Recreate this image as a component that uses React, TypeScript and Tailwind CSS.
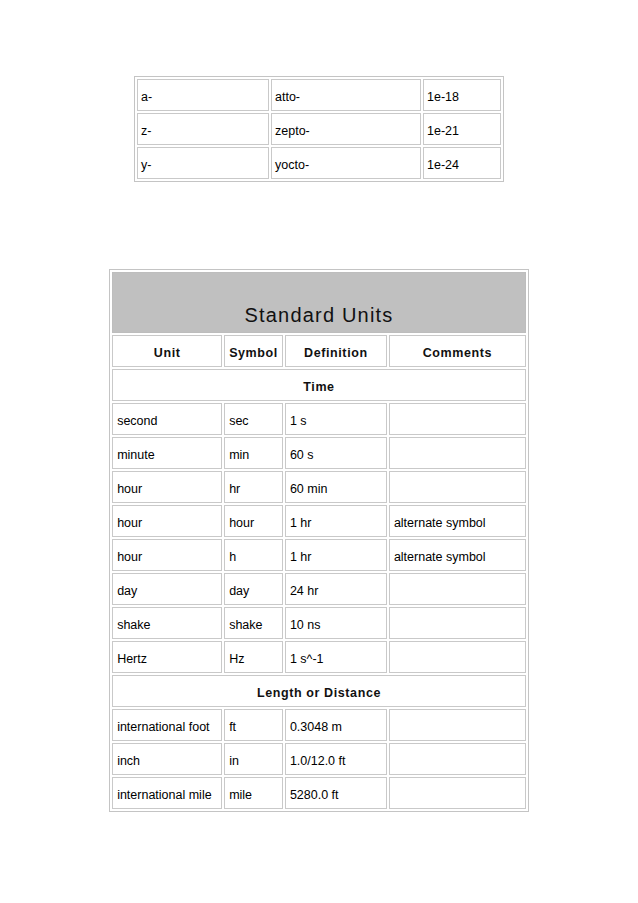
const PREFIXES = [
  ["a-", "atto-", "1e-18"],
  ["z-", "zepto-", "1e-21"],
  ["y-", "yocto-", "1e-24"],
];

type Row = { section: string } | { cells: [string, string, string, string] };

const UNITS: Row[] = [
  { section: "Time" },
  { cells: ["second", "sec", "1 s", ""] },
  { cells: ["minute", "min", "60 s", ""] },
  { cells: ["hour", "hr", "60 min", ""] },
  { cells: ["hour", "hour", "1 hr", "alternate symbol"] },
  { cells: ["hour", "h", "1 hr", "alternate symbol"] },
  { cells: ["day", "day", "24 hr", ""] },
  { cells: ["shake", "shake", "10 ns", ""] },
  { cells: ["Hertz", "Hz", "1 s^-1", ""] },
  { section: "Length or Distance" },
  { cells: ["international foot", "ft", "0.3048 m", ""] },
  { cells: ["inch", "in", "1.0/12.0 ft", ""] },
  { cells: ["international mile", "mile", "5280.0 ft", ""] },
];

const cell = "border border-[#c9c9c9] h-[32px] pt-[5px] pb-0 px-[4px] align-middle";
const small = "border border-[#c9c9c9] h-[32px] pt-[5px] pb-0 px-[3px] align-middle";

export default function App() {
  return (
    <div className="min-h-[903px] bg-white pt-[76px] font-['Liberation_Sans',Arial,sans-serif] text-[12.5px] text-black">
      <table className="mx-auto table-fixed border-separate border-spacing-[2px] border border-[#c4c4c4]">
        <tbody>
          {PREFIXES.map((r) => (
            <tr key={r[0]}>
              <td className={`${small} w-[132px]`}>{r[0]}</td>
              <td className={`${small} w-[150px]`}>{r[1]}</td>
              <td className={`${small} w-[78px]`}>{r[2]}</td>
            </tr>
          ))}
        </tbody>
      </table>

      <table className="mx-auto mt-[87px] table-fixed border-separate border-spacing-[2px] border border-[#c4c4c4]">
        <tbody>
          <tr>
            <td
              colSpan={4}
              className="h-[61px] border border-[#bdbdbd] bg-[#c0c0c0] pb-[2px] text-center align-bottom text-[20px] tracking-[1.2px] text-[#111]"
            >
              Standard Units
            </td>
          </tr>
          <tr className="font-bold tracking-[0.6px] text-[#111]">
            <td className={`${cell} w-[110px] text-center`}>Unit</td>
            <td className={`${cell} w-[58px] text-center`}>Symbol</td>
            <td className={`${cell} w-[102px] text-center`}>Definition</td>
            <td className={`${cell} w-[137px] text-center`}>Comments</td>
          </tr>
          {UNITS.map((r, i) =>
            "section" in r ? (
              <tr key={i}>
                <td colSpan={4} className={`${cell} text-center font-bold tracking-[0.6px] text-[#111]`}>
                  {r.section}
                </td>
              </tr>
            ) : (
              <tr key={i}>
                {r.cells.map((c, j) => (
                  <td key={j} className={`${cell} whitespace-nowrap`}>
                    {c}
                  </td>
                ))}
              </tr>
            )
          )}
        </tbody>
      </table>
    </div>
  );
}
